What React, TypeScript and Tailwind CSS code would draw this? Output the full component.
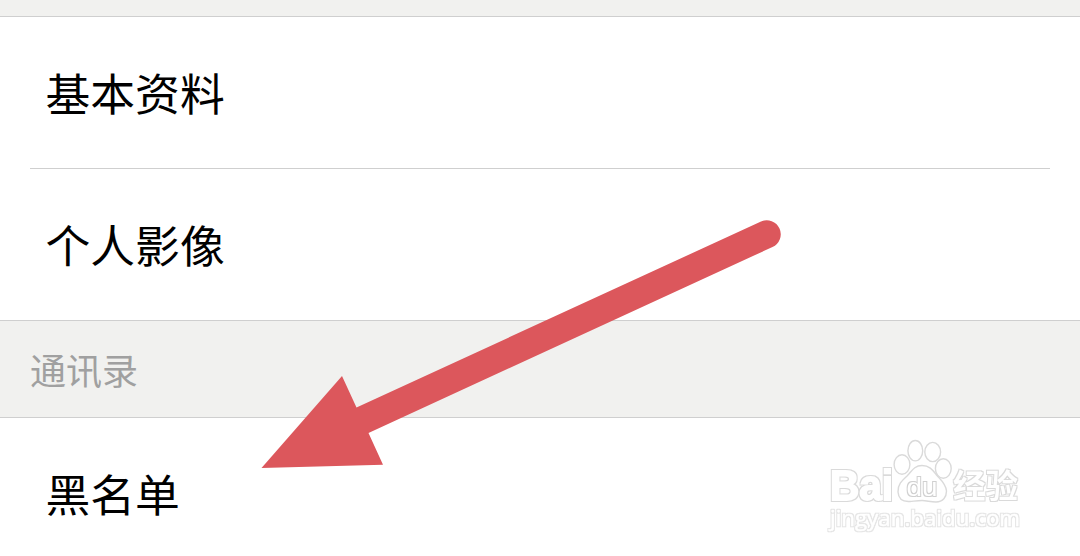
import React from 'react';

const cjk = "font-['Noto_Sans_CJK_SC',sans-serif]";

function Row({ label }: { label: string }) {
  return <div className="flex h-[151px] items-center pl-[45.5px] text-[44.8px] leading-none text-black">{label}</div>;
}

function Outline({ id, color }: { id: string; color: string }) {
  return (
    <filter id={id} x="-10%" y="-20%" width="120%" height="140%" colorInterpolationFilters="sRGB">
      <feMorphology in="SourceAlpha" operator="dilate" radius="1" result="edge" />
      <feFlood floodColor={color} />
      <feComposite in2="edge" operator="in" result="line" />
      <feMerge>
        <feMergeNode in="line" />
        <feMergeNode in="SourceGraphic" />
      </feMerge>
    </filter>
  );
}

function Watermark() {
  return (
    <svg className="absolute left-[810px] top-[425px]" width="230" height="120" viewBox="0 0 230 120" fill="#fff" stroke="#dadada" strokeWidth="1.4">
      <defs>
        <Outline id="edge-logo" color="#dadada" />
        <Outline id="edge-du" color="#d0d0d0" />
        <Outline id="edge-url" color="#e4e4e4" />
      </defs>
      <g stroke="#fff" filter="url(#edge-logo)">
        <text x="20" y="75" fontFamily="Liberation Sans" fontWeight="700" fontSize="43" textLength="63" lengthAdjust="spacingAndGlyphs" strokeWidth="1.8">Bai</text>
        <text x="143" y="72.500" fontFamily="Noto Sans CJK SC" fontWeight="700" fontSize="32.500" textLength="65" strokeWidth="0">经验</text>
      </g>
      <ellipse cx="92" cy="39.5" rx="7.9" ry="9.8" />
      <ellipse cx="105.3" cy="25.7" rx="7.4" ry="10.2" />
      <ellipse cx="122.7" cy="27" rx="7.9" ry="9.6" />
      <ellipse cx="133.3" cy="43.5" rx="7.9" ry="9.8" />
      <path d="M112 40.5C104 40.5 101.500 46.500 97.500 50.500C92 55.500 87.500 59.500 88 67C88.500 74 93 77 100 76.500C105 76 108 75.500 112 75.500C117 75.500 120 77 126 77C133 77 136.500 72 136.500 66C136 59 131 55 127 50.500C123 45.500 120 40.500 112 40.500Z" />
      <text x="96.500" y="70.500" fontFamily="Liberation Sans" fontSize="26" textLength="31" lengthAdjust="spacingAndGlyphs" stroke="none" filter="url(#edge-du)">du</text>
      <text x="20" y="101" fontFamily="Open Sans" fontSize="21.500" textLength="190" lengthAdjust="spacingAndGlyphs" stroke="#fff" strokeWidth="0.5" filter="url(#edge-url)">jingyan.baidu.com</text>
    </svg>
  );
}

export default function App() {
  return (
    <main className={`relative h-[556px] w-[1080px] overflow-hidden bg-white ${cjk}`}>
      <div className="h-[17px] border-b border-[#cfcfcf] bg-[#f1f1ef]" />
      <Row label="基本资料" />
      <div className="mx-[30px] h-px bg-[#cfcfcf]" />
      <Row label="个人影像" />
      <div className="flex h-[98px] items-center border-y border-[#cfcfcf] bg-[#f1f1ef] pl-[30px] text-[36px] leading-none text-[#a0a0a0]">通讯录</div>
      <Row label="黑名单" />
      <svg className="absolute left-0 top-0" width="1080" height="556" fill="#dc575c">
        <path d="M261.500 468L342 376L356.500 407.500L761 221.500A13.900 13.900 0 0 1 772.500 247L368.500 433L383 464.700Z" />
      </svg>
      <Watermark />
    </main>
  );
}
